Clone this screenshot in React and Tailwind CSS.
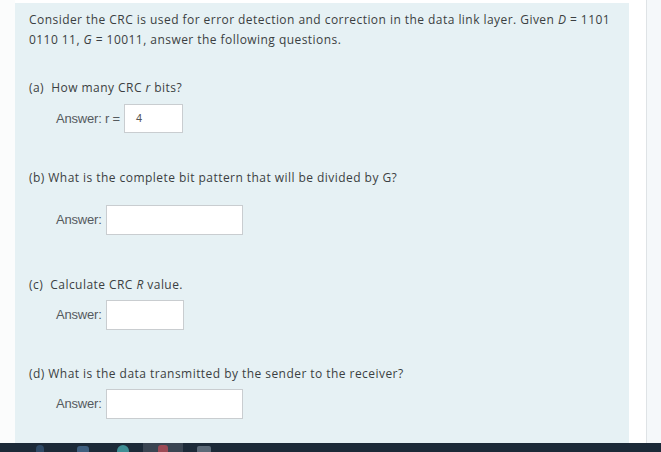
import React from "react";

const Q = ({ children, className = "" }) => (
  <div className={`whitespace-nowrap text-[12px] tracking-[0.45px] leading-[20px] text-[#3b3f42] ${className}`}>{children}</div>
);

const Answer = ({ label, value, boxW, className = "" }) => (
  <div className={`flex items-center pl-[27px] ${className}`}>
    <span className="whitespace-nowrap font-['Liberation_Sans',Arial,sans-serif] text-[13px] tracking-[-0.2px] text-[#555a5e] mr-[4px]">{label}</span>
    <div className={`${boxW} bg-white border border-[#c9cdd0] flex items-center pl-[11px] font-['Liberation_Sans',Arial,sans-serif] text-[11px] text-[#555]`}>
      {value}
    </div>
  </div>
);

export default function App() {
  return (
    <div className="w-[661px] h-[452px] bg-white flex flex-col overflow-hidden font-['Open_Sans',sans-serif]">
      <div className="flex flex-1 min-h-0">
        <div className="w-[15px] bg-[#fbfcfc]" />
        <div className="w-[614px] mt-[3px] bg-[#e6f1f4] pl-[14px] pt-[7px]">
          <Q>
            Consider the CRC is used for error detection and correction in the data link layer. Given <i>D</i> = 1101
            <br />
            0110 11, <i>G</i> = 10011, answer the following questions.
          </Q>
          <Q className="mt-[28px]">(a)&nbsp; How many CRC <i>r</i> bits?</Q>
          <Answer className="mt-[6px]" label="Answer: r =" value="4" boxW="w-[59px] h-[29px]" />
          <Q className="mt-[35px]">(b) What is the complete bit pattern that will be divided by G?</Q>
          <Answer className="mt-[17px]" label="Answer:" value="" boxW="w-[137px] h-[30px]" />
          <Q className="mt-[40px]">(c)&nbsp; Calculate CRC <i>R</i> value.</Q>
          <Answer className="mt-[5px]" label="Answer:" value="" boxW="w-[78px] h-[30px]" />
          <Q className="mt-[34px]">(d) What is the data transmitted by the sender to the receiver?</Q>
          <Answer className="mt-[5px]" label="Answer:" value="" boxW="w-[137px] h-[30px]" />
        </div>
        <div className="w-[17px] bg-white" />
        <div className="w-px bg-[#dfe3e6]" />
        <div className="flex-1 bg-[#f5f8fa]" />
      </div>
      <div className="h-[9px] bg-[#1c2a38] relative">
        <div className="absolute left-[36px] top-[2px] w-[8px] h-[7px] rounded-t-full bg-[#2f4a66]" />
        <div className="absolute left-[77px] top-[3px] w-[12px] h-[6px] rounded-t-[3px] bg-[#3f5f7f]" />
        <div className="absolute left-[117px] top-[2px] w-[12px] h-[7px] rounded-t-full bg-[#3f8f95]" />
        <div className="absolute left-[143px] top-0 w-[40px] h-[9px] bg-[#3a4552]" />
        <div className="absolute left-[158px] top-[2px] w-[10px] h-[7px] rounded-t-[3px] bg-[#9c4a55]" />
        <div className="absolute left-[197px] top-[3px] w-[14px] h-[6px] rounded-t-[2px] bg-[#5b6977]" />
      </div>
    </div>
  );
}
